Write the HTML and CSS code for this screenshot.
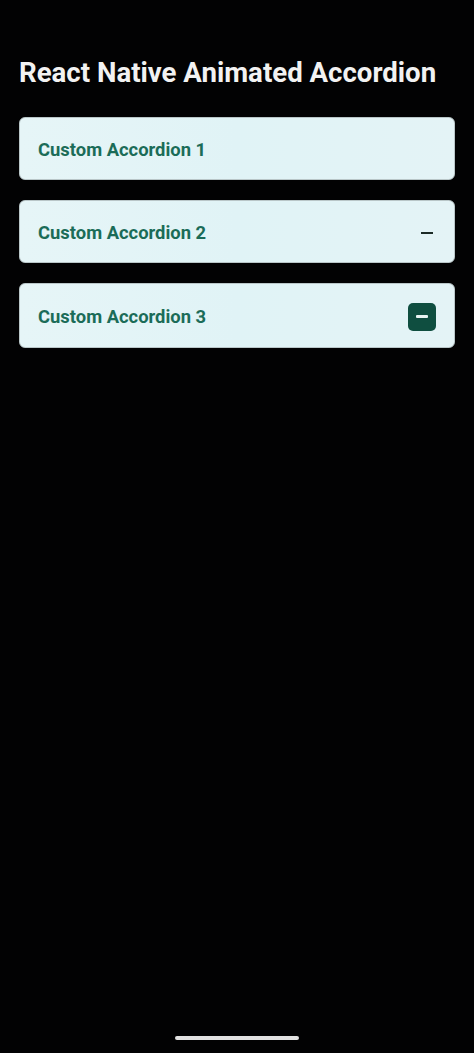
FILE: index.html
```
<!DOCTYPE html>
<html>
<head>
<meta charset="utf-8">
<link rel="stylesheet" href="styles.css">
</head>
<body>
<div class="screen">
  <h1 class="title">React Native Animated Accordion</h1>
  <div class="list">
    <div class="card">
      <span class="label">Custom Accordion 1</span>
    </div>
    <div class="card">
      <span class="label">Custom Accordion 2</span>
      <span class="minus"></span>
    </div>
    <div class="card card-tall">
      <span class="label">Custom Accordion 3</span>
      <span class="minus-box"><span class="minus-inner"></span></span>
    </div>
  </div>
  <div class="spacer"></div>
  <div class="home-bar"></div>
</div>
</body>
</html>
```
FILE: styles.css
```
html, body {
  margin: 0;
  padding: 0;
  background: #020203;
}
.screen {
  width: 474px;
  height: 1053px;
  display: flex;
  flex-direction: column;
  box-sizing: border-box;
  padding: 56px 19px 0 19px;
  font-family: Roboto, "Liberation Sans", sans-serif;
}
.title {
  margin: 0;
  color: #f2f2f2;
  font-size: 27.6px;
  line-height: 34px;
  font-weight: 700;
  letter-spacing: 0;
}
.list {
  margin-top: 27px;
  display: flex;
  flex-direction: column;
  gap: 20px;
}
.card {
  height: 63px;
  box-sizing: border-box;
  border: 1px solid #b9c6c8;
  border-radius: 6px;
  background: linear-gradient(90deg, #e6f5f7 0%, #e0f3f6 50%, #e4f3f6 100%);
  display: flex;
  align-items: center;
  justify-content: space-between;
  padding: 2px 18px 0 18px;
}
.card-tall {
  height: 65px;
}
.label {
  color: #1b6c58;
  font-size: 18.4px;
  font-weight: 700;
}
.minus {
  width: 12px;
  height: 2px;
  background: #1b2a26;
  margin-right: 3px;
}
.minus-box {
  width: 28px;
  height: 28px;
  border-radius: 5px;
  background: #0f4e40;
  display: flex;
  align-items: center;
  justify-content: center;
}
.minus-inner {
  width: 12px;
  height: 3px;
  border-radius: 1px;
  background: #e8f4f2;
}
.spacer {
  flex: 1;
}
.home-bar {
  align-self: center;
  width: 124px;
  height: 4px;
  border-radius: 2px;
  background: #e2e2e2;
  margin-bottom: 13px;
}
```
